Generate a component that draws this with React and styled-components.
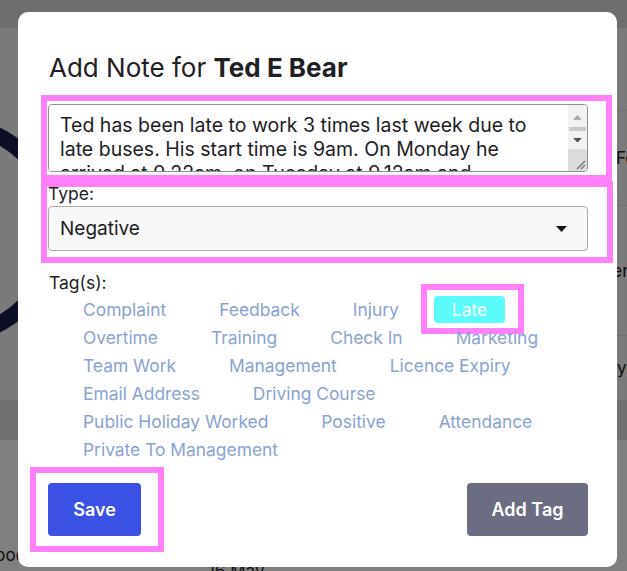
import styled, { createGlobalStyle } from "styled-components";

const pink = "#ff80f8";
const tagColor = "#88a3d2";

const GlobalStyle = createGlobalStyle`
  html, body {
    margin: 0;
    padding: 0;
  }
  body {
    font-family: Inter, "Noto Sans", sans-serif;
  }
`;

const tags = [
  "Complaint",
  "Feedback",
  "Injury",
  "Late",
  "Overtime",
  "Training",
  "Check In",
  "Marketing",
  "Team Work",
  "Management",
  "Licence Expiry",
  "Email Address",
  "Driving Course",
  "Public Holiday Worked",
  "Positive",
  "Attendance",
  "Private To Management",
];

const noteText =
  "Ted has been late to work 3 times last week due to late buses. His start time is 9am. On Monday he arrived at 9.22am, on Tuesday at 9.12am and Thursday at 9.31am.";

const listRows = [
  { label: "Feedback", shift: 10, height: 95 },
  { label: "Overtime", shift: -16, height: 130 },
  { label: "Layout", shift: -8, height: 65 },
];

const ScrollRail = function () {
  return (
    <Rail>
      <svg width='9' height='5' viewBox='0 0 9 5'>
        <path d='M0 5L4.5 0L9 5z' fill='#a3a3a3' />
      </svg>
      <Thumb />
      <svg width='9' height='5' viewBox='0 0 9 5'>
        <path d='M0 0h9L4.5 5z' fill='#505050' />
      </svg>
      <Corner>
        <svg width='10' height='10' viewBox='0 0 10 10'>
          <path
            d='M1 9L9 1M5 9L9 5'
            stroke='#6f6f6f'
            strokeWidth='1.2'
            fill='none'
          />
        </svg>
      </Corner>
    </Rail>
  );
};

const AddNoteModal = function () {
  return (
    <Modal>
      <Title>
        Add Note for <strong>Ted E Bear</strong>
      </Title>
      <Highlight pad='3px 18px 3px 1px' width='571px' top='12px'>
        <NoteBox>
          <NoteInput defaultValue={noteText} />
          <ScrollRail />
        </NoteBox>
      </Highlight>
      <Highlight pad='0 19px 6px 1px' width='572px' top='0'>
        <FieldLabel>Type:</FieldLabel>
        <SelectBox>
          <span>Negative</span>
          <svg width='11' height='6' viewBox='0 0 11 6'>
            <path d='M0 0h11L5.5 6z' fill='#111' />
          </svg>
        </SelectBox>
      </Highlight>
      <TagLabel>Tag(s):</TagLabel>
      <TagList>
        {tags.map((t) =>
          t === "Late" ? (
            <TagHighlight key={t}>
              <Tag selected>{t}</Tag>
            </TagHighlight>
          ) : (
            <Tag key={t}>{t}</Tag>
          )
        )}
      </TagList>
      <Footer>
        <Highlight pad='10px 17px 10px 12px' width='auto' top='0'>
          <Button color='#3a51e4' width='93px'>
            Save
          </Button>
        </Highlight>
        <Button color='#6b6e82' width='121px'>
          Add Tag
        </Button>
      </Footer>
    </Modal>
  );
};

const App = function () {
  return (
    <>
      <GlobalStyle />
      <Page>
        <TopBar />
        <Content>
          <ChartPanel>
            <svg width='60' height='250' viewBox='0 0 60 250'>
              <circle
                cx='-50'
                cy='102'
                r='106'
                fill='none'
                stroke='#161c4a'
                strokeWidth='16'
              />
            </svg>
          </ChartPanel>
          <ListPanel>
            <ListHead />
            {listRows.map((r) => (
              <ListRow key={r.label} height={r.height}>
                <ListText shift={r.shift}>{r.label}</ListText>
              </ListRow>
            ))}
          </ListPanel>
        </Content>
        <Band />
        <Lower>
          <LowerCell>Food</LowerCell>
          <LowerDate>16 May</LowerDate>
        </Lower>
        <Backdrop />
        <AddNoteModal />
      </Page>
    </>
  );
};

export default App;

const Page = styled.div`
  position: relative;
  width: 627px;
  height: 571px;
  overflow: hidden;
  display: flex;
  flex-direction: column;
  background: #f6f6f6;
  color: #222;
`;

const TopBar = styled.div`
  height: 28px;
  flex-shrink: 0;
  background: #dcdce2;
`;

const Content = styled.div`
  height: 372px;
  flex-shrink: 0;
  display: flex;
  justify-content: space-between;
  background: #f4f4f4;
`;

const ChartPanel = styled.div`
  padding-top: 100px;
`;

const ListPanel = styled.div`
  width: 21px;
  display: flex;
  flex-direction: column;
  overflow: hidden;
  border-left: 1px solid #e6e6e6;
`;

const ListHead = styled.div`
  height: 82px;
  flex-shrink: 0;
  border-bottom: 1px solid #dedede;
`;

const ListRow = styled.div`
  height: ${(props) => props.height}px;
  flex-shrink: 0;
  box-sizing: border-box;
  display: flex;
  align-items: center;
  white-space: nowrap;
  font-size: 17px;
  border-bottom: 1px solid #dedede;
`;

const ListText = styled.span`
  margin-left: ${(props) => props.shift}px;
`;

const Band = styled.div`
  height: 40px;
  flex-shrink: 0;
  background: #e0e0e0;
`;

const Lower = styled.div`
  flex: 1;
  display: flex;
  align-items: flex-end;
  background: #ffffff;
  font-size: 17px;
`;

const LowerCell = styled.div`
  margin: 0 0 6px -14px;
  width: 222px;
`;

const LowerDate = styled.div`
  margin-bottom: -10px;
`;

const Backdrop = styled.div`
  position: absolute;
  inset: 0;
  background: rgba(0, 0, 0, 0.5);
`;

const Modal = styled.div`
  position: absolute;
  left: 18px;
  top: 12px;
  width: 599px;
  height: 555px;
  box-sizing: border-box;
  background: #fff;
  border-radius: 10px;
  display: flex;
  flex-direction: column;
  align-items: flex-start;
`;

const Title = styled.h2`
  margin: 40px 0 0 31px;
  font-size: 26px;
  line-height: 31px;
  font-weight: 400;
  color: #1f2024;
  strong {
    font-weight: 700;
  }
`;

const Highlight = styled.div`
  box-sizing: border-box;
  width: ${(props) => props.width};
  margin: ${(props) => props.top} 0 0 23px;
  border: 6px solid ${pink};
  padding: ${(props) => props.pad};
`;

const NoteBox = styled.div`
  box-sizing: border-box;
  height: 68px;
  display: flex;
  border: 1px solid #8f8f8f;
  border-radius: 4px;
  overflow: hidden;
`;

const NoteInput = styled.textarea`
  flex: 1;
  display: block;
  box-sizing: border-box;
  height: 100%;
  margin: 0;
  padding: 8px 30px 8px 11px;
  border: none;
  outline: none;
  resize: none;
  overflow: hidden;
  font-family: Inter, "Noto Sans", sans-serif;
  font-size: 19.5px;
  line-height: 24px;
  color: #1d1d1f;
`;

const Rail = styled.div`
  width: 19px;
  display: flex;
  flex-direction: column;
  align-items: center;
  padding-top: 10px;
  gap: 7px;
  background: #f1f1f1;
`;

const Thumb = styled.div`
  width: 17px;
  height: 4px;
  background: #c8c8c8;
`;

const Corner = styled.div`
  margin-top: auto;
  align-self: stretch;
  height: 22px;
  display: flex;
  align-items: flex-end;
  justify-content: flex-end;
  padding: 0 1px 1px 0;
  background: #dcdcdc;
`;

const FieldLabel = styled.div`
  margin-top: -1px;
  font-size: 17.5px;
  line-height: 16px;
  color: #1f1f1f;
`;

const SelectBox = styled.div`
  box-sizing: border-box;
  height: 45px;
  margin-top: 4px;
  padding: 0 20px 0 11px;
  display: flex;
  align-items: center;
  justify-content: space-between;
  background: #f8f8f8;
  border: 1px solid #a9a9a9;
  border-radius: 4px;
  font-size: 19px;
  color: #1d1d1f;
`;

const TagLabel = styled.div`
  margin: 10px 0 0 31px;
  font-size: 17.5px;
  line-height: 20px;
  color: #1f1f1f;
`;

const TagList = styled.div`
  box-sizing: border-box;
  width: 540px;
  margin: 3px 0 0 47px;
  display: flex;
  flex-wrap: wrap;
  align-items: center;
  column-gap: 17px;
  row-gap: 1px;
`;

const Tag = styled.span`
  display: inline-block;
  padding: 0 18px;
  line-height: 27px;
  font-size: 17.4px;
  border-radius: 4px;
  color: ${(props) => (props.selected ? "#fff" : tagColor)};
  background: ${(props) => (props.selected ? "#5cfbfb" : "transparent")};
`;

const TagHighlight = styled.span`
  display: inline-flex;
  margin: -12px -19px -11px -13px;
  padding: 6px 13px 5px 7px;
  border: 6px solid ${pink};
`;

const Footer = styled.div`
  align-self: stretch;
  margin: 4px 29px 0 12px;
  display: flex;
  align-items: center;
  justify-content: space-between;
  & > div {
    margin-left: 0;
  }
`;

const Button = styled.button`
  display: block;
  width: ${(props) => props.width};
  height: 53px;
  padding: 0;
  border: none;
  border-radius: 4px;
  background: ${(props) => props.color};
  color: #fff;
  font-family: Inter, "Noto Sans", sans-serif;
  font-size: 18px;
  font-weight: 600;
`;
